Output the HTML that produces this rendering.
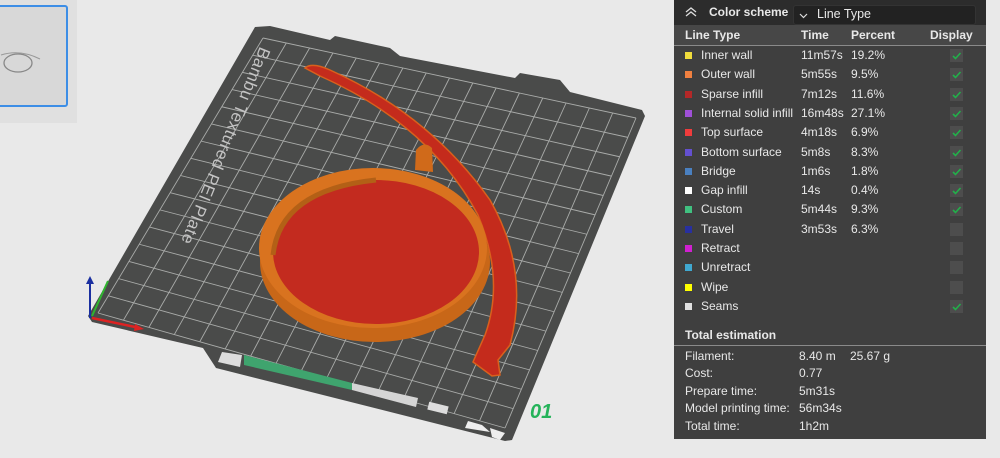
<!DOCTYPE html>
<html><head><meta charset="utf-8"><style>
body{margin:0;width:1000px;height:458px;background:#e9e9e9;position:relative;overflow:hidden;font-family:"Liberation Sans","DejaVu Sans",sans-serif}
.thumbwrap{position:absolute;left:0;top:0;width:77px;height:123px;background:#e0e0e0}
.thumb{position:absolute;left:-4px;top:5px;width:68px;height:98px;border:2px solid #3d8ee6;border-radius:3px;background:#d8d8d8}
#panel{position:absolute;left:674px;top:0;width:312px;height:439px;background:#3f3f3f;color:#e8e8e8;font-size:12px}
.hdr{position:absolute;left:0;top:0;width:312px;height:25px;background:#2c2c2c}
.colh{position:absolute;left:0;top:25px;width:312px;height:20px;background:#474747;border-bottom:1px solid #8a8a8a;font-weight:bold}
.t{position:absolute;white-space:nowrap}
.sw{position:absolute;width:7px;height:7px}
.cb{position:absolute;left:276px;width:13px;height:13px;background:#4d4d4d}
.cb svg{position:absolute;left:1px;top:1px}
</style></head><body>
<div class="thumbwrap"><div class="thumb">
<svg width="68" height="98" style="position:absolute;left:0;top:0"><ellipse cx="20" cy="56" rx="14" ry="9" fill="none" stroke="#888" stroke-width="1.3"/><path d="M3 48 Q22 42 42 52" fill="none" stroke="#999" stroke-width="1"/></svg>
</div></div>
<svg id="scene" width="674" height="458" style="position:absolute;left:0;top:0">
<polygon points="255,27 270,26 330,40 335,36 390,48 400,56 515,78 520,73 560,80 570,92 642,110 645,116 512,440 505,441 216,368 203,348 92,322 88,316" fill="#4a4b4a"/>
<g id="grid" stroke="#a9aba9" stroke-width="0.9"></g>
<g font-family="Liberation Sans,sans-serif" font-size="17" fill="#c4c4c4">
<text transform="translate(260,46) rotate(112)" letter-spacing="0.5">Bambu Textured PEI Plate</text></g>
<polygon points="222,352 242,355 240,367 218,362" fill="#ddd"/>
<polygon points="244,355 352,383 352,390 244,365" fill="#3fa46e"/>
<polygon points="352,383 418,398 416,407 352,390" fill="#d5d5d5"/>
<rect x="428" y="404" width="20" height="8" fill="#ddd" transform="rotate(14 438 408)"/>
<polygon points="468,421 482,425 490,432 465,428" fill="#eee"/>
<polygon points="490,428 505,433 500,440 492,437" fill="#eee"/>
<text x="530" y="418" font-family="Liberation Sans,sans-serif" font-size="20" font-weight="bold" font-style="italic" fill="#25b35a">01</text>
<path d="M305,68 Q312,62 330,70 Q430,115 490,200 Q530,270 510,345 L498,360 L500,375 L492,376 L473,362 L485,335 Q505,280 478,215 Q430,125 320,76 Z" fill="#c42b1c" stroke="#d9601c" stroke-width="1.5"/>
<ellipse cx="375" cy="262" rx="115" ry="80" fill="#c86718"/>
<path d="M415,170 L416,150 Q424,140 432,148 L433,172 Z" fill="#d06a1a"/>
<ellipse cx="373" cy="248" rx="114" ry="80" fill="#d9731f"/>
<ellipse cx="376" cy="252" rx="103" ry="72" fill="#c32b1f"/>
<path d="M273,255 Q280,190 376,180" fill="none" stroke="#b36016" stroke-width="5"/>
<line x1="90" y1="318" x2="90" y2="280" stroke="#1a2fa0" stroke-width="2"/><polygon points="86,284 90,276 94,284" fill="#1a2fa0"/>
<line x1="92" y1="316" x2="108" y2="281" stroke="#2fb52f" stroke-width="2"/>
<line x1="92" y1="318" x2="140" y2="328" stroke="#d22" stroke-width="2.5"/><polygon points="135,324 144,329 134,331" fill="#d22"/>
</svg>
<script>
(function(){var g=document.getElementById('grid');
var TL=[263,38],TR=[636,118],BR=[505,428],BL=[98,313];
function P(u,v){var x=(1-u)*(1-v)*TL[0]+u*(1-v)*TR[0]+u*v*BR[0]+(1-u)*v*BL[0];var y=(1-u)*(1-v)*TL[1]+u*(1-v)*TR[1]+u*v*BR[1]+(1-u)*v*BL[1];return [x,y];}
var N=16,s='';for(var i=0;i<=N;i++){var a=P(i/N,0),b=P(i/N,1);s+='<line x1="'+a[0]+'" y1="'+a[1]+'" x2="'+b[0]+'" y2="'+b[1]+'"/>';var c=P(0,i/N),d=P(1,i/N);s+='<line x1="'+c[0]+'" y1="'+c[1]+'" x2="'+d[0]+'" y2="'+d[1]+'"/>';}
g.innerHTML=s;})();
</script>
<div id="panel">
<div class="hdr">
<svg width="12" height="10" style="position:absolute;left:11px;top:7px"><path d="M1 5 L6 1 L11 5 M1 9 L6 5 L11 9" fill="none" stroke="#ddd" stroke-width="1.3"/></svg>
<div class="t" style="left:35px;top:5px;font-weight:bold;font-size:12px">Color scheme</div>
<div style="position:absolute;left:119px;top:5px;width:181px;height:18px;background:#222;border:1px solid #333;border-radius:3px"></div>
<svg width="9" height="6" style="position:absolute;left:125px;top:13px"><path d="M1 1 L4.5 4.5 L8 1" fill="none" stroke="#ddd" stroke-width="1.2"/></svg>
<div class="t" style="left:143px;top:7px;font-size:12.5px">Line Type</div>
</div>
<div class="colh"><div class="t" style="left:11px;top:3px">Line Type</div><div class="t" style="left:127px;top:3px">Time</div><div class="t" style="left:177px;top:3px">Percent</div><div class="t" style="left:256px;top:3px">Display</div></div>
<div id="rows"></div>
<div class="t" style="left:11px;top:328px;font-weight:bold">Total estimation</div>
<div style="position:absolute;left:0;top:345px;width:312px;height:1px;background:#8a8a8a"></div>
<div class="t" style="left:11px;top:349px">Filament:</div><div class="t" style="left:125px;top:349px">8.40 m</div><div class="t" style="left:176px;top:349px">25.67 g</div>
<div class="t" style="left:11px;top:366px">Cost:</div><div class="t" style="left:125px;top:366px">0.77</div>
<div class="t" style="left:11px;top:384px">Prepare time:</div><div class="t" style="left:125px;top:384px">5m31s</div>
<div class="t" style="left:11px;top:401px">Model printing time:</div><div class="t" style="left:125px;top:401px">56m34s</div>
<div class="t" style="left:11px;top:419px">Total time:</div><div class="t" style="left:125px;top:419px">1h2m</div>
</div>
<script>
(function(){var R=[["#f0dc3c","Inner wall","11m57s","19.2%",1],["#f08040","Outer wall","5m55s","9.5%",1],["#b42828","Sparse infill","7m12s","11.6%",1],["#a050d8","Internal solid infill","16m48s","27.1%",1],["#f03c3c","Top surface","4m18s","6.9%",1],["#6450d0","Bottom surface","5m8s","8.3%",1],["#4a80c0","Bridge","1m6s","1.8%",1],["#ffffff","Gap infill","14s","0.4%",1],["#40c080","Custom","5m44s","9.3%",1],["#2830a0","Travel","3m53s","6.3%",0],["#d020d0","Retract","","",0],["#40a8d0","Unretract","","",0],["#ffff00","Wipe","","",0],["#e0e0e0","Seams","","",1]];
var h='';for(var i=0;i<R.length;i++){var y=48+i*19.3,r=R[i];h+='<div class="sw" style="left:11px;top:'+(y+4)+'px;background:'+r[0]+'"></div><div class="t" style="left:27px;top:'+y+'px">'+r[1]+'</div><div class="t" style="left:127px;top:'+y+'px">'+r[2]+'</div><div class="t" style="left:177px;top:'+y+'px">'+r[3]+'</div><div class="cb" style="top:'+(y+1)+'px">'+(r[4]?'<svg width="11" height="11"><path d="M2 6 L4.5 8.5 L9.5 3" fill="none" stroke="#22b04a" stroke-width="1.6"/></svg>':'')+'</div>';}
document.getElementById('rows').innerHTML=h;})();
</script>
</body></html>
